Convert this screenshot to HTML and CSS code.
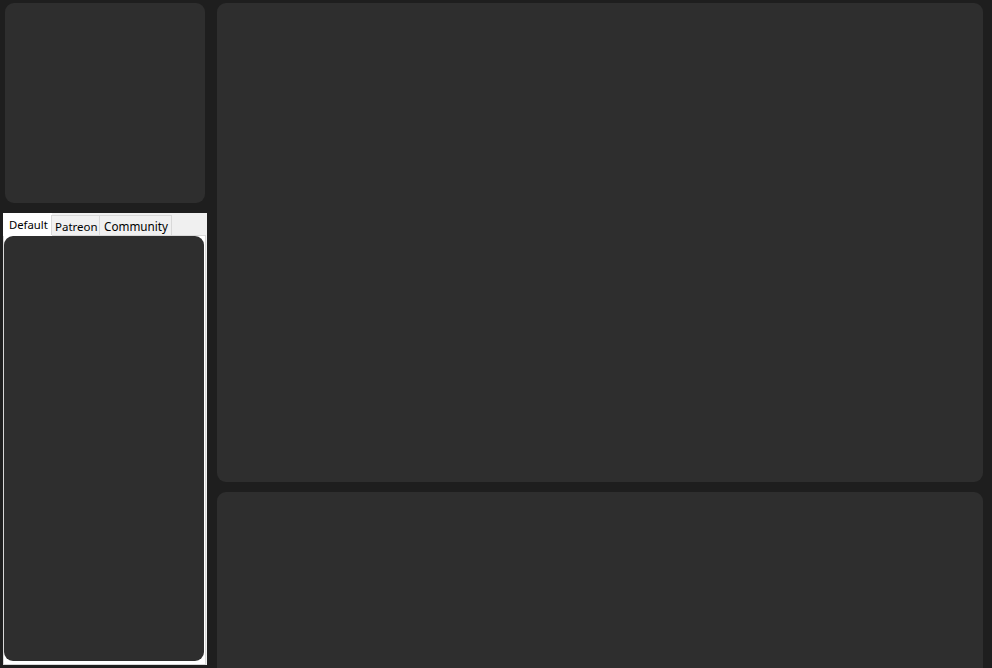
FILE: index.html
```html
<!DOCTYPE html>
<html>
<head>
<meta charset="utf-8">
<link rel="stylesheet" href="styles.css">
</head>
<body>
<div class="app">
  <div class="left">
    <div class="panel panel-preview"></div>
    <div class="tabcontrol">
      <div class="tabstrip">
        <div class="tab active">Default</div>
        <div class="tab">Patreon</div>
        <div class="tab">Community</div>
      </div>
      <div class="tabpage">
        <div class="panel panel-list"></div>
      </div>
    </div>
  </div>
  <div class="right">
    <div class="panel panel-main"></div>
    <div class="panel panel-bottom"></div>
  </div>
</div>
</body>
</html>
```
FILE: styles.css
```css
html, body {
  margin: 0;
  padding: 0;
  background: #1e1e1e;
  overflow: hidden;
}
.app {
  display: flex;
  gap: 10px;
  height: 668px;
  padding: 3px 9px 0 3px;
  box-sizing: border-box;
  overflow: hidden;
}
.panel {
  background: #2e2e2e;
  border-radius: 9px;
}
.left {
  width: 204px;
  flex: none;
  display: flex;
  flex-direction: column;
  gap: 10px;
}
.panel-preview {
  width: 200px;
  height: 200px;
  margin-left: 2px;
}
.tabcontrol {
  width: 204px;
  height: 452px;
  background: #f0f0f0;
  display: flex;
  flex-direction: column;
}
.tabstrip {
  display: flex;
  align-items: flex-end;
  height: 22px;
  position: relative;
  z-index: 1;
}
.tab {
  height: 20px;
  box-sizing: border-box;
  border: 1px solid #d9d9d9;
  border-bottom: none;
  margin-left: -1px;
  padding: 0 3px;
  font-family: "Noto Sans", "Open Sans", sans-serif;
  font-size: 11.5px;
  line-height: 21px;
  color: #000;
  background: #f0f0f0;
}
.tab:first-child {
  margin-left: 0;
}
.tab.active {
  width: 49px;
  height: 23px;
  margin-bottom: -1px;
  background: #fff;
  border-color: #fff;
  padding: 0 4px 0 5px;
  font-size: 11.3px;
  line-height: 22px;
}
.tab:nth-child(2) {
  width: 49px;
}
.tab:nth-child(3) {
  width: 73px;
  padding-left: 4px;
  font-size: 11.7px;
}
.tabpage {
  width: 203px;
  height: 430px;
  box-sizing: border-box;
  border: 1px solid #d9d9d9;
  background: #fff;
  padding: 0 1px 2px 0;
}
.panel-list {
  width: 200px;
  height: 425px;
}
.right {
  flex: 1;
  display: flex;
  flex-direction: column;
  gap: 10px;
  min-width: 0;
}
.panel-main {
  height: 479px;
  flex: none;
}
.panel-bottom {
  height: 300px;
  flex: none;
}
```
